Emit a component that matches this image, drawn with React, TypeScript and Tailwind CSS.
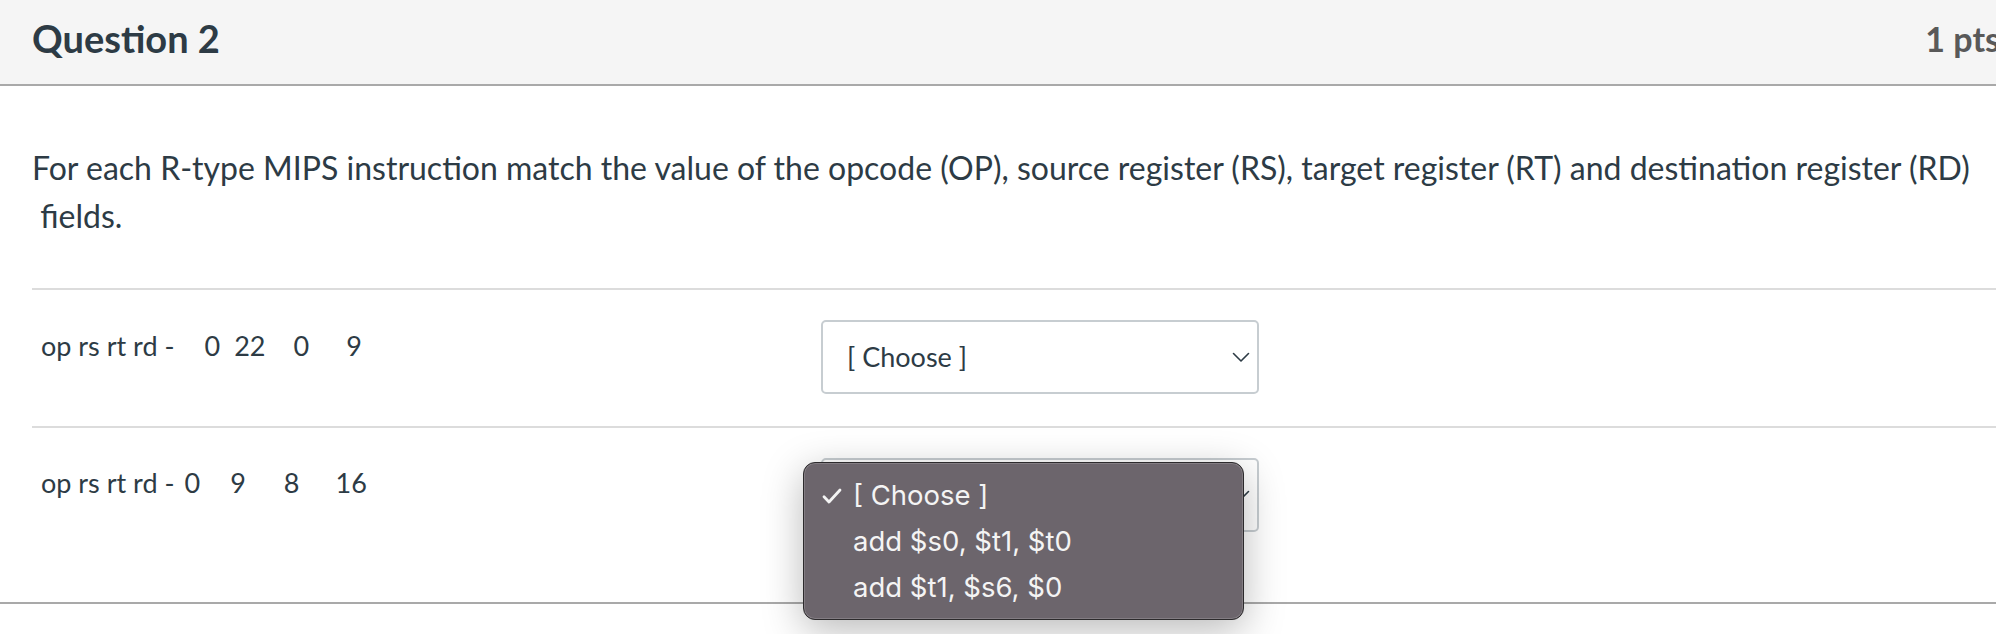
import React from 'react';

const LATO = "font-['Lato','Liberation_Sans',sans-serif]";

function Chevron() {
  return (
    <svg width="18" height="11" viewBox="0 0 18 11" fill="none" className="shrink-0">
      <path d="M1.5 1.5 L9 9 L16.5 1.5" stroke="#2d3b45" strokeWidth="1.6" strokeLinecap="round" strokeLinejoin="round" />
    </svg>
  );
}

function Check() {
  return (
    <svg width="20" height="16" viewBox="0 0 20 16" fill="none">
      <path d="M2 8.8 L7 14 L18 2" stroke="#f4f4f4" strokeWidth="2.8" strokeLinecap="round" strokeLinejoin="round" />
    </svg>
  );
}

function SelectBox() {
  return (
    <div className="w-[438px] h-[74px] border-2 border-[#c7cdd1] rounded-[5px] bg-white flex items-center justify-between pl-[24px] pr-[7px]">
      <span className="text-[27px] text-[#2d3b45]">[ Choose ]</span>
      <Chevron />
    </div>
  );
}

function OpenMenu() {
  const options = ['[ Choose ]', 'add $s0, $t1, $t0', 'add $t1, $s6, $0'];
  return (
    <div className="absolute left-[-18px] top-[34px] w-[441px] h-[158px] rounded-[12px] bg-[#6c656c] border border-[#2c2a2c] shadow-[0_10px_40px_rgba(0,0,0,0.28),inset_0_0_0_1px_rgba(255,255,255,0.16)] pt-[10px] font-['Inter','Open_Sans',sans-serif]">
      {options.map((opt, i) => (
        <div key={opt} className="h-[46px] flex items-center text-[27.5px] text-[#f4f4f4]">
          <span className="w-[49px] pl-[18px] flex items-center">{i === 0 ? <Check /> : null}</span>
          <span>{opt}</span>
        </div>
      ))}
    </div>
  );
}

export default function App() {
  return (
    <div className={`w-[1996px] h-[634px] overflow-hidden bg-white ${LATO}`}>
      <div className="w-[2030px] border-b-2 border-[#a9a9a9]">
        {/* question header */}
        <div className="h-[86px] bg-[#f5f5f5] border-b-2 border-[#a9a9a9] flex items-center justify-between pl-[32px] pr-[30px] pb-[8px]">
          <h2 className="text-[38px] font-bold text-[#2d3b45]">Question 2</h2>
          <span className="text-[34px] font-bold text-[#595959]">1 pts</span>
        </div>

        <div className="pt-[58px] pl-[32px] text-[#2d3b45]">
          <p className="text-[32px] leading-[48px] mb-[48px] whitespace-nowrap">
            For each R-type MIPS instruction match the value of the opcode (OP), source register (RS), target register (RT) and destination register (RD)
            <br />
            {'\u00a0'}fields.
          </p>

          <div className="border-t-2 border-[#dcdcdc]">
            <div className="h-[138px] flex items-start border-b-2 border-[#dcdcdc]">
              <div className="w-[789px] pl-[9px] pt-[38px] text-[27px] leading-[36px] whitespace-pre">
                <span>op rs rt rd -</span>
                <span className="ml-[30px]">0</span>
                <span className="ml-[14px]">22</span>
                <span className="ml-[28px]">0</span>
                <span className="ml-[37px]">9</span>
              </div>
              <div className="pt-[30px]">
                <SelectBox />
              </div>
            </div>

            <div className="h-[174px] flex items-start">
              <div className="w-[789px] pl-[9px] pt-[37px] text-[27px] leading-[36px] whitespace-pre">
                <span>op rs rt rd -</span>
                <span className="ml-[10px]">0</span>
                <span className="ml-[30px]">9</span>
                <span className="ml-[38px]">8</span>
                <span className="ml-[36px]">16</span>
              </div>
              <div className="pt-[30px] relative">
                <SelectBox />
                <OpenMenu />
              </div>
            </div>
          </div>
        </div>
      </div>
    </div>
  );
}
